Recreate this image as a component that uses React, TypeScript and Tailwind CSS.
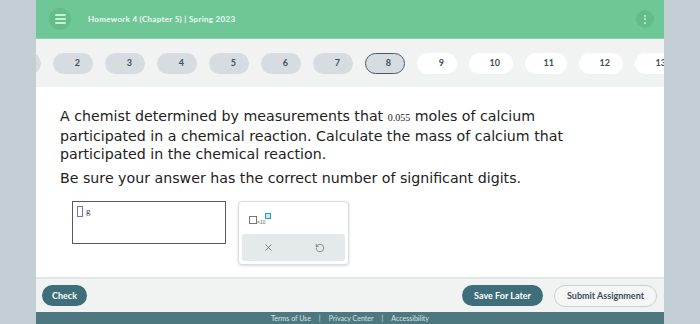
import { X, RotateCcw } from 'lucide-react';

const pills = [1, 2, 3, 4, 5, 6, 7, 8, 9, 10, 11, 12, 13];

function Pill({ n }: { n: number }) {
  const done = n <= 8;
  const current = n === 8;
  const wide = n >= 10;
  return (
    <div
      className={
        'flex h-[21px] shrink-0 items-center justify-end rounded-full pr-[13px] text-[9px] font-bold text-[#3e4f59] ' +
        (wide ? (n === 11 ? 'w-[42px] ' : 'w-[44px] ') : 'w-[40px] ') +
        (current
          ? 'border-[1.5px] border-[#4b5b64] bg-[#d6dcdf]'
          : done
            ? 'bg-[#d6dcdf]'
            : 'bg-white')
      }
    >
      {n > 1 ? n : ''}
    </div>
  );
}

export default function App() {
  return (
    <div className="flex h-[324px] w-[700px] overflow-hidden bg-[#c3ced5] font-['Lato',sans-serif]">
      <div className="w-[36px] shrink-0" />

      <main className="flex w-[628px] shrink-0 flex-col">
        {/* header */}
        <header className="flex h-[39px] items-center border-b border-[#86d3a8] bg-[#6fc797] pl-[13px] pr-[10px]">
          <div className="flex h-[22px] w-[22px] flex-col items-center justify-center gap-[2px] rounded-full bg-[#65bc8b]">
            <span className="h-[2px] w-[11px] rounded bg-[#c2f2d4]" />
            <span className="h-[2px] w-[11px] rounded bg-[#c2f2d4]" />
            <span className="h-[2px] w-[11px] rounded bg-[#c2f2d4]" />
          </div>
          <span className="ml-[17px] text-[8px] font-bold tracking-[0.3px] text-[#eefaf2]">
            Homework 4 (Chapter 5) | Spring 2023
          </span>
          <div className="ml-auto flex h-[18px] w-[18px] flex-col items-center justify-center gap-[1.5px] rounded-full bg-[#65bc8b]">
            <span className="h-[2px] w-[2px] rounded-full bg-[#c2f2d4]" />
            <span className="h-[2px] w-[2px] rounded-full bg-[#c2f2d4]" />
            <span className="h-[2px] w-[2px] rounded-full bg-[#c2f2d4]" />
          </div>
        </header>

        {/* question pills */}
        <div className="flex h-[48px] items-center overflow-hidden bg-[#f1f2f2]">
          <div className="-ml-[35px] flex gap-[12px]">
            {pills.map((n) => (
              <Pill key={n} n={n} />
            ))}
          </div>
        </div>

        {/* question */}
        <section className="flex-1 border-b-2 border-[#e3e6e7] bg-white pl-[24px] pt-[20px] font-['DejaVu_Sans',sans-serif] text-[14.2px] leading-[18px] text-[#222]">
          <p className="max-w-[512px]">
            A chemist determined by measurements that{' '}
            <span className="font-['Liberation_Serif',serif] text-[10px]">0.055</span> moles of calcium
            participated in a chemical reaction. Calculate the mass of calcium that participated in the
            chemical reaction.
          </p>
          <p className="mt-[6px]">Be sure your answer has the correct number of significant digits.</p>

          <div className="ml-[12px] mt-[14px] flex items-start gap-[12px]">
            <div className="h-[43px] w-[154px] border border-[#5a5a5a] pl-[4px] pt-[4px]">
              <div className="flex items-center gap-[3px]">
                <span className="h-[11px] w-[6px] border border-[#7b6fb5]" />
                <span className="font-['Liberation_Serif',serif] text-[9px] leading-none text-[#333]">g</span>
              </div>
            </div>

            <div className="flex h-[64px] w-[111px] flex-col rounded-[4px] border border-[#d9dee2] bg-white p-[3px] shadow-[0_1px_3px_rgba(0,0,0,0.15)]">
              <div className="flex h-[29px] items-center pl-[7px]">
                <span className="h-[8px] w-[8px] border border-[#777]" />
                <span className="mt-[4px] font-['Liberation_Sans',sans-serif] text-[5px] text-[#666]">×10</span>
                <span className="-mt-[7px] h-[6px] w-[6px] border border-[#2a9fa6] bg-[#bfeef0]" />
              </div>
              <div className="flex flex-1 items-center justify-around rounded-[3px] bg-[#e4e9ec] text-[#555f66]">
                <X size={11} strokeWidth={1.6} />
                <RotateCcw size={10} strokeWidth={1.6} />
              </div>
            </div>
          </div>
        </section>

        {/* action bar */}
        <div className="flex h-[33px] items-center bg-[#f1f2f2] px-[6px]">
          <button className="h-[21px] rounded-full bg-[#3e6e7a] px-[10px] text-[9px] font-bold text-white">
            Check
          </button>
          <button className="ml-auto h-[21px] w-[81px] rounded-full bg-[#3e6e7a] text-[9px] font-bold text-white">
            Save For Later
          </button>
          <button className="ml-[11px] mr-[1px] h-[22px] w-[103px] rounded-full border border-[#c9d1d5] bg-[#f5f6f6] text-[9px] font-bold text-[#3c4d57]">
            Submit Assignment
          </button>
        </div>

        {/* footer */}
        <footer className="flex h-[12px] items-center justify-center gap-[8px] bg-[#4e787f] text-[7px] text-[#d6e4e6]">
          <span>Terms of Use</span>
          <span>|</span>
          <span>Privacy Center</span>
          <span>|</span>
          <span>Accessibility</span>
        </footer>
      </main>

      <div className="flex-1" />
    </div>
  );
}
